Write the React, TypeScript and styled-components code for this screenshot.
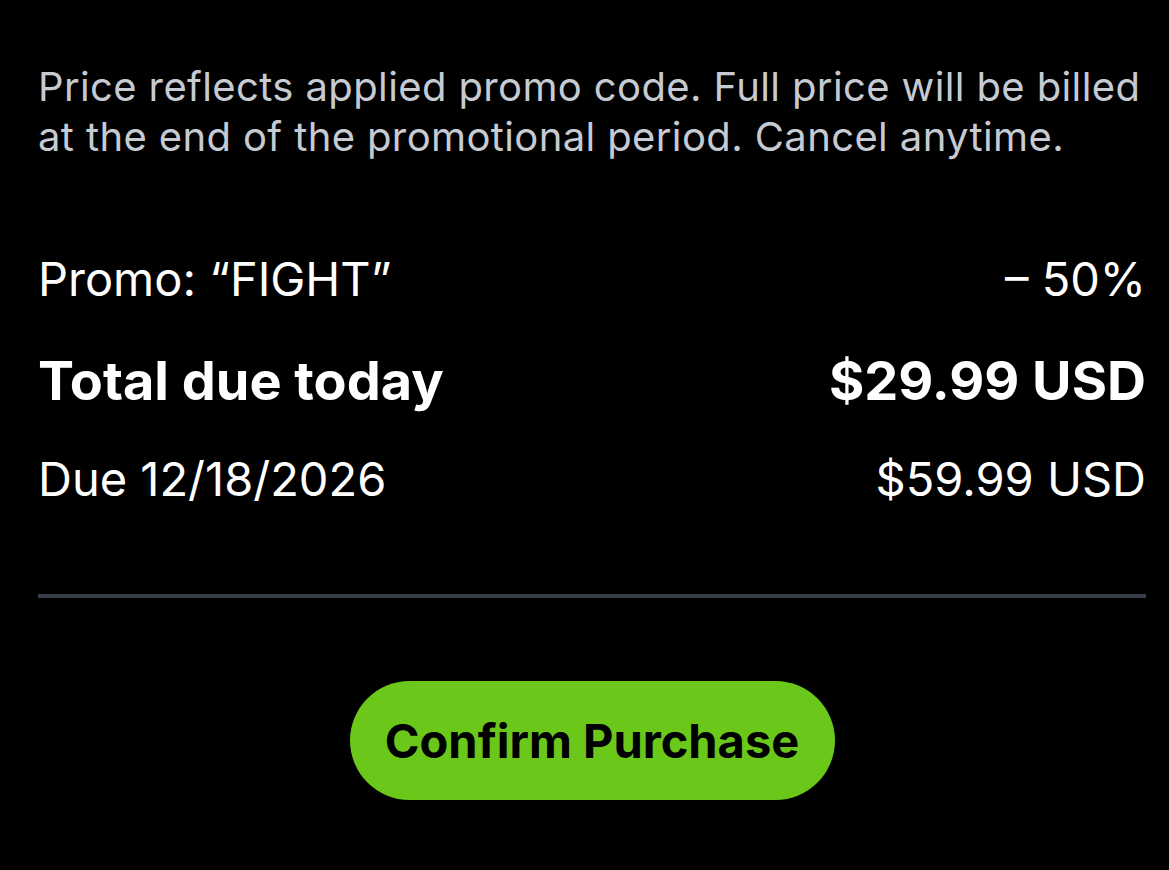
import styled, { createGlobalStyle } from "styled-components";

const GlobalStyle = createGlobalStyle`
  html, body {
    margin: 0;
    padding: 0;
    background: #000;
  }
  body {
    font-family: Inter, "Noto Sans", sans-serif;
    -webkit-font-smoothing: antialiased;
  }
`;

const Page = styled.div`
  width: 1169px;
  height: 870px;
  background: #000;
  box-sizing: border-box;
  padding: 62px 23px 0 38px;
  display: flex;
  flex-direction: column;
`;

const Notice = styled.p`
  margin: 0;
  font-size: 40px;
  line-height: 50px;
  letter-spacing: 0.38px;
  color: #c6cbd3;
  font-weight: 400;
  white-space: nowrap;
`;

const Summary = styled.div`
  margin-top: 76px;
  display: flex;
  flex-direction: column;
`;

const Row = styled.div<{ $bold?: boolean; $height: number }>`
  display: flex;
  justify-content: space-between;
  align-items: center;
  height: ${(p) => p.$height}px;
  color: #fff;
  font-size: ${(p) => (p.$bold ? 54 : 47)}px;
  font-weight: ${(p) => (p.$bold ? 700 : 400)};
`;

const Divider = styled.hr`
  margin: 80px 0 0;
  border: none;
  height: 4px;
  background: #383e48;
`;

const ButtonWrap = styled.div`
  display: flex;
  justify-content: center;
  margin-top: 83px;
`;

const ConfirmButton = styled.button`
  width: 485px;
  height: 119px;
  border: none;
  border-radius: 60px;
  background: #6cc71b;
  color: #000;
  font-family: Inter, "Noto Sans", sans-serif;
  font-size: 47px;
  font-weight: 700;
  cursor: pointer;
`;

const App = () => {
  return (
    <>
      <GlobalStyle />
      <Page>
        <Notice>
          Price reflects applied promo code. Full price will be billed
          <br />
          at the end of the promotional period. Cancel anytime.
        </Notice>
        <Summary>
          <Row $height={80}>
            <span>Promo: “FIGHT”</span>
            <span>– 50%</span>
          </Row>
          <Row $bold $height={124}>
            <span>Total due today</span>
            <span>$29.99 USD</span>
          </Row>
          <Row $height={72}>
            <span>Due 12/18/2026</span>
            <span>$59.99 USD</span>
          </Row>
        </Summary>
        <Divider />
        <ButtonWrap>
          <ConfirmButton>Confirm Purchase</ConfirmButton>
        </ButtonWrap>
      </Page>
    </>
  );
};

export default App;
